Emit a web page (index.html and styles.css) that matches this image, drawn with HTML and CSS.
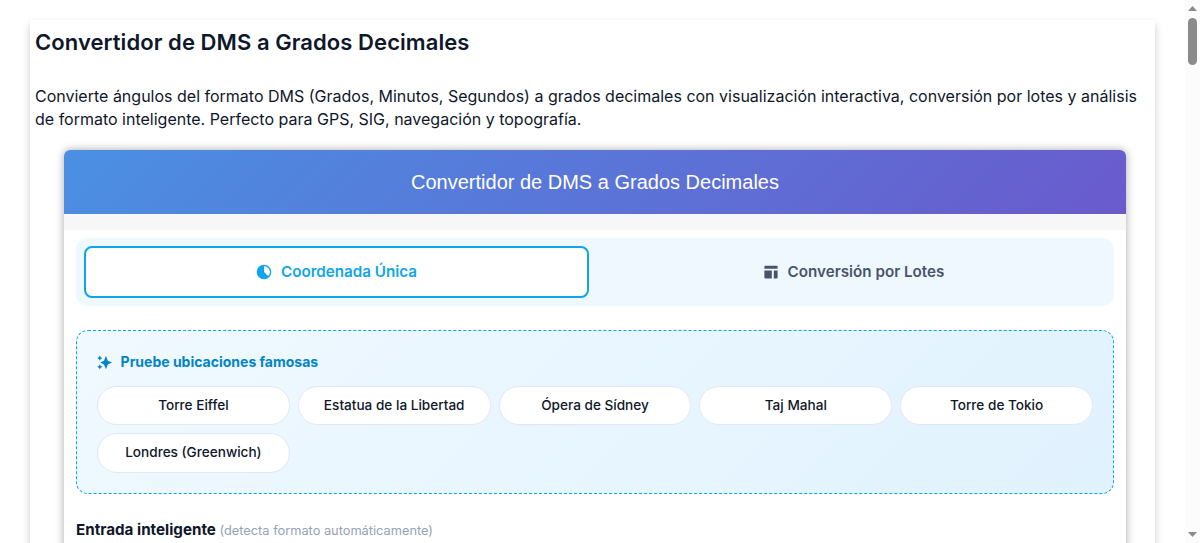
FILE: index.html
```html
<!DOCTYPE html>
<html lang="es">
<head>
  <meta charset="UTF-8">
  <meta name="viewport" content="width=device-width, initial-scale=1.0">
  <title>Convertidor de DMS a Grados Decimales</title>
  <link rel="stylesheet" href="styles.css">
</head>
<body>
  <div class="page">
    <main class="content">
      <h1>Convertidor de DMS a Grados Decimales</h1>
      <p class="intro">Convierte ángulos del formato DMS (Grados, Minutos, Segundos) a grados decimales con visualización interactiva, conversión por lotes y análisis de formato inteligente. Perfecto para GPS, SIG, navegación y topografía.</p>

      <div class="converter">
        <div class="converter-header">Convertidor de DMS a Grados Decimales</div>
        <div class="converter-strip"></div>
        <div class="converter-body">
          <div class="tabs">
            <button class="tab active">
              <svg class="tab-icon" viewBox="0 0 16 16"><path fill="currentColor" fill-rule="evenodd" d="M8 .7a7.3 7.3 0 1 0 0 14.6A7.3 7.3 0 0 0 8 .7zM8 2.3A5.7 5.7 0 0 1 12.1 12.1L8 8z"/></svg>
              <span>Coordenada Única</span>
            </button>
            <button class="tab">
              <svg class="tab-icon" viewBox="0 0 16 16"><path fill="currentColor" d="M2.4 1.7h11.2a1 1 0 0 1 1 1v2H1.4v-2a1 1 0 0 1 1-1zM1.4 6.5h7.4v8H2.4a1 1 0 0 1-1-1zM10.8 6.5h3.8v7a1 1 0 0 1-1 1h-2.8z"/></svg>
              <span>Conversión por Lotes</span>
            </button>
          </div>

          <section class="examples">
            <div class="examples-title">
              <svg class="examples-icon" viewBox="0 0 16 16"><path fill="currentColor" d="M9.5 .8l2 5.2L16 8l-4.5 2-2 5.2-2-5.2L3.4 8l4.1-2zM3 .6l.9 1.9 1.9.9-1.9.9L3 6.2l-.9-1.9-1.9-.9 1.9-.9zM3 9.8l.9 1.9 1.9.9-1.9.9-.9 1.9-.9-1.9-1.9-.9 1.9-.9z"/></svg>
              <span>Pruebe ubicaciones famosas</span>
            </div>
            <div class="examples-grid">
              <button class="chip">Torre Eiffel</button>
              <button class="chip">Estatua de la Libertad</button>
              <button class="chip">Ópera de Sídney</button>
              <button class="chip">Taj Mahal</button>
              <button class="chip">Torre de Tokio</button>
              <button class="chip">Londres (Greenwich)</button>
            </div>
          </section>

          <label class="field-label">Entrada inteligente <span class="hint">(detecta formato automáticamente)</span></label>
        </div>
      </div>
    </main>

    <div class="scrollbar">
      <svg class="arrow" viewBox="0 0 9 5"><path fill="#8b8b8b" d="M4.5 0L9 5H0z"/></svg>
      <div class="thumb"></div>
      <svg class="arrow arrow-down" viewBox="0 0 9 5"><path fill="#8b8b8b" d="M0 0h9L4.5 5z"/></svg>
    </div>
  </div>
</body>
</html>
```
FILE: styles.css
```css
* {
  box-sizing: border-box;
}

body {
  margin: 0;
  font-family: Inter, sans-serif;
  color: #0f172a;
  background: #fff;
  overflow: hidden;
}

.page {
  display: flex;
  height: 543px;
  overflow: hidden;
}

.content {
  width: 1125px;
  height: 1200px;
  margin: 20px 30px 0;
  padding: 5px;
  flex-shrink: 0;
  box-shadow: 0 4px 8px rgba(0,0,0,0.2);
}

h1 {
  margin: 0;
  font-size: 22px;
  font-weight: 600;
  letter-spacing: 0.07px;
  line-height: 34px;
}

.intro {
  margin: 26px 0 19px;
  font-size: 16px;
  line-height: 23px;
}

.converter {
  width: 1062px;
  height: 1000px;
  margin-left: 29px;
  border-radius: 6px;
  box-shadow: 0 0 8px rgba(0,0,0,0.35);
  overflow: hidden;
}

.converter-header {
  height: 64px;
  font-family: "Liberation Sans", Arial, sans-serif;
  font-size: 20px;
  line-height: 64px;
  text-align: center;
  color: #fff;
  background: linear-gradient(135deg, #4a90e2 0%, #6a5acd 100%);
}

.converter-strip {
  height: 16px;
  background: #f7f7f7;
}

.converter-body {
  padding: 8px 12px;
}

.tabs {
  display: grid;
  grid-template-columns: 1fr 1fr;
  gap: 12px;
  height: 68px;
  padding: 8px;
  background: #f0f8ff;
  border-radius: 12px;
}

.tab {
  display: flex;
  align-items: center;
  justify-content: center;
  gap: 9px;
  padding: 0;
  border: 2px solid transparent;
  border-radius: 8px;
  background: none;
  font-family: inherit;
  font-size: 15.2px;
  font-weight: 600;
  color: #475569;
  cursor: pointer;
}

.tab span {
  padding-bottom: 2px;
}

.tab.active {
  background: #fff;
  border-color: #0ea5e9;
  color: #0ea5e9;
}

.tab-icon {
  width: 16px;
  height: 16px;
}

.examples {
  height: 164px;
  margin-top: 24px;
  padding: 20px;
  border: 1px dashed #0ea5e9;
  border-radius: 12px;
  background: linear-gradient(135deg, #f0f9ff 0%, #e0f2fe 100%);
}

.examples-title {
  display: flex;
  align-items: center;
  gap: 8.6px;
  height: 22px;
  margin-bottom: 13px;
  font-size: 14px;
  font-weight: 700;
  color: #0284c7;
}

.examples-title span {
  padding-bottom: 2px;
}

.examples-icon {
  width: 15px;
  height: 15px;
}

.examples-grid {
  display: grid;
  grid-template-columns: repeat(5, 1fr);
  grid-auto-rows: 39.4px;
  gap: 8px;
}

.chip {
  padding: 0 0 2px;
  border: 1px solid #e2e8f0;
  border-radius: 20px;
  background: #fff;
  font-family: inherit;
  font-size: 13.6px;
  font-weight: 500;
  color: #0f172a;
  cursor: pointer;
}

.field-label {
  display: block;
  margin-top: 24px;
  font-size: 15.2px;
  font-weight: 700;
  line-height: 23px;
}

.hint {
  font-size: 12.8px;
  font-weight: 400;
  color: #94a3b8;
}

.scrollbar {
  display: flex;
  flex-direction: column;
  align-items: center;
  width: 15px;
  flex-shrink: 0;
  padding: 6px 0;
  background: #fcfcfc;
}

.thumb {
  width: 9px;
  height: 47px;
  margin-top: 7px;
  border-radius: 5px;
  background: #8b8b8b;
}

.arrow {
  width: 9px;
  height: 5px;
}

.arrow-down {
  margin-top: auto;
}
```
